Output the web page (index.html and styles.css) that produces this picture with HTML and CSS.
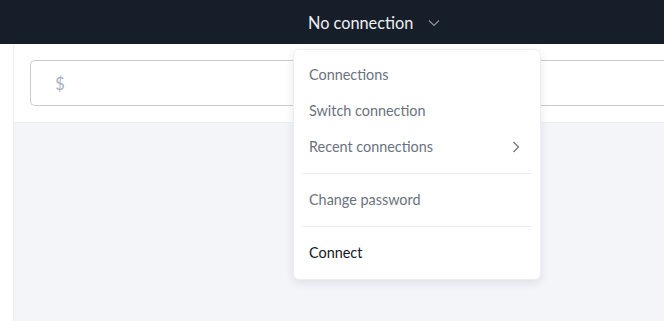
FILE: index.html
```html
<!DOCTYPE html>
<html lang="en">

  <head>
    <meta charset="UTF-8">
    <meta name="viewport" content="width=device-width, initial-scale=1.0">
    <title>No connection</title>
    <link rel="stylesheet" href="styles.css">
  </head>

  <body>

    <header class="topbar">
      <div class="conn">
        <button class="conn-btn">
          <span>No connection</span>
          <svg class="caret" width="12" height="8" viewBox="0 0 12 8"><path d="M1 1.5 L6 6.5 L11 1.5" fill="none" stroke="#8b929c" stroke-width="1.2"/></svg>
        </button>

        <div class="menu">
          <div class="item">Connections</div>
          <div class="item">Switch connection</div>
          <div class="item has-sub">
            <span>Recent connections</span>
            <svg width="8" height="12" viewBox="0 0 8 12"><path d="M1.5 1 L6.5 6 L1.5 11" fill="none" stroke="#6b7280" stroke-width="1.2"/></svg>
          </div>
          <div class="sep"></div>
          <div class="item">Change password</div>
          <div class="sep"></div>
          <div class="item active">Connect</div>
        </div>
      </div>
    </header>

    <div class="page">
      <aside class="side"></aside>
      <main class="main">
        <div class="query">
          <div class="input"><span class="prompt">$</span></div>
        </div>
        <div class="results"></div>
      </main>
    </div>

  </body>

</html>
```

FILE: styles.css
```css
body {
  font-family: 'Lato', 'Noto Sans', sans-serif;
  margin: 0;
  padding: 0;
  height: 321px;
  overflow: hidden;
  background: #ffffff;
}

.topbar {
  height: 44px;
  background-color: #161e29;
  display: flex;
  align-items: center;
}

.conn {
  position: relative;
  margin-left: 308px;
}

.conn-btn {
  display: flex;
  align-items: center;
  gap: 15px;
  padding: 0;
  border: none;
  background: none;
  color: #eef0f3;
  font-family: inherit;
  font-size: 16.3px;
  cursor: pointer;
}

.caret {
  margin-top: 1px;
}

.menu {
  position: absolute;
  top: 36px;
  left: -15px;
  width: 248px;
  box-sizing: border-box;
  padding: 7px 8px 8px;
  background: white;
  border: 1px solid #eceef2;
  border-radius: 6px;
  box-shadow: 0 3px 8px rgba(30, 41, 59, 0.1);
  z-index: 2;
}

.item {
  height: 36px;
  display: flex;
  align-items: center;
  justify-content: space-between;
  padding: 0 12px 0 7px;
  font-size: 14.4px;
  color: #6b7280;
}

.item.active {
  color: #111827;
}

.sep {
  height: 1px;
  background: #e9ebef;
  margin: 8px 0;
}

.page {
  display: flex;
  height: 277px;
}

.side {
  width: 13px;
  border-right: 1px solid #eceef1;
  background: white;
}

.main {
  flex: 1;
  display: flex;
  flex-direction: column;
  background: #f4f5f9;
}

.query {
  background: white;
  padding: 16px 0 16px 16px;
  border-bottom: 1px solid #eceef2;
}

.input {
  height: 44px;
  border: 1px solid #c9cbd0;
  border-right: none;
  border-radius: 5px 0 0 5px;
  display: flex;
  align-items: center;
  padding-left: 24px;
}

.prompt {
  color: #a9b1bf;
  font-size: 17px;
}
```
